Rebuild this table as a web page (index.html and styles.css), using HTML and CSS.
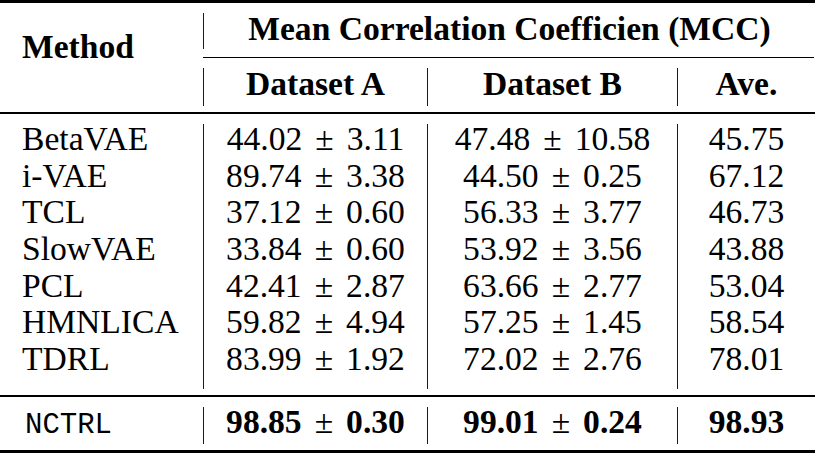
FILE: index.html
```html
<!DOCTYPE html>
<html lang="en">
<head>
<meta charset="utf-8">
<title>Mean Correlation Coefficient results</title>
<link rel="stylesheet" href="styles.css">
</head>
<body>
<div class="table">
  <div class="rule rule-heavy"></div>
  <div class="head">
    <div class="head-method">Method</div>
    <div class="head-right">
      <div class="head-title">Mean Correlation Coefficien (MCC)</div>
      <div class="cmid"></div>
      <div class="head-cols">
        <div class="hcell">Dataset A</div>
        <div class="hcell">Dataset B</div>
        <div class="hcell">Ave.</div>
      </div>
    </div>
  </div>
  <div class="rule rule-mid"></div>
  <div class="block">
    <div class="row"><div class="c-name">BetaVAE</div><div class="c-num">44.02<span class="pm">±</span>3.11</div><div class="c-num">47.48<span class="pm">±</span>10.58</div><div class="c-num">45.75</div></div>
    <div class="row"><div class="c-name">i-VAE</div><div class="c-num">89.74<span class="pm">±</span>3.38</div><div class="c-num">44.50<span class="pm">±</span>0.25</div><div class="c-num">67.12</div></div>
    <div class="row"><div class="c-name">TCL</div><div class="c-num">37.12<span class="pm">±</span>0.60</div><div class="c-num">56.33<span class="pm">±</span>3.77</div><div class="c-num">46.73</div></div>
    <div class="row"><div class="c-name">SlowVAE</div><div class="c-num">33.84<span class="pm">±</span>0.60</div><div class="c-num">53.92<span class="pm">±</span>3.56</div><div class="c-num">43.88</div></div>
    <div class="row"><div class="c-name">PCL</div><div class="c-num">42.41<span class="pm">±</span>2.87</div><div class="c-num">63.66<span class="pm">±</span>2.77</div><div class="c-num">53.04</div></div>
    <div class="row"><div class="c-name">HMNLICA</div><div class="c-num">59.82<span class="pm">±</span>4.94</div><div class="c-num">57.25<span class="pm">±</span>1.45</div><div class="c-num">58.54</div></div>
    <div class="row row-last"><div class="c-name">TDRL</div><div class="c-num">83.99<span class="pm">±</span>1.92</div><div class="c-num">72.02<span class="pm">±</span>2.76</div><div class="c-num">78.01</div></div>
  </div>
  <div class="rule rule-mid"></div>
  <div class="block">
    <div class="row row-best"><div class="c-name"><span class="tt">NCTRL</span></div><div class="c-num">98.85<span class="pm">±</span>0.30</div><div class="c-num">99.01<span class="pm">±</span>0.24</div><div class="c-num">98.93</div></div>
  </div>
  <div class="rule rule-heavy"></div>
</div>
</body>
</html>
```

FILE: styles.css
```css
* {
  box-sizing: border-box;
  margin: 0;
  padding: 0;
}

html, body {
  background: #ffffff;
}

body {
  margin: 0;
  font-family: "Liberation Serif", "Times New Roman", serif;
  font-size: 33.6px;
  color: #000000;
}

.table {
  width: 815px;
}

.rule {
  background: #000000;
}

.rule-heavy {
  height: 3px;
}

.rule-mid {
  height: 2px;
}

.head {
  display: grid;
  grid-template-columns: 203px 612px;
}

.head-method {
  font-weight: bold;
  line-height: 37.2px;
  padding: 25px 0 0 22px;
}

.head-right {
  padding: 10px 0 6px;
}

.head-title {
  border-left: 1px solid #1a1a1a;
  font-weight: bold;
  text-align: center;
  line-height: 32.5px;
  height: 36px;
}

.cmid {
  height: 1px;
  background: #000000;
  margin: 8px 1px 10px 0;
}

.head-cols {
  display: grid;
  grid-template-columns: 224px 250px 138px;
}

.hcell {
  border-left: 1px solid #1a1a1a;
  font-weight: bold;
  text-align: center;
  line-height: 31px;
  height: 38px;
}

.block {
  padding: 10px 0 6px;
}

.row {
  display: grid;
  grid-template-columns: 203px 224px 250px 138px;
}

.row > div {
  line-height: 29.3px;
  height: 36.67px;
  white-space: nowrap;
}

.row-last > div {
  height: 44.67px;
}

.row-best > div {
  line-height: 29px;
  height: 37px;
}

.c-name {
  padding-left: 22px;
}

.c-num {
  border-left: 1px solid #1a1a1a;
  text-align: center;
}

.pm {
  padding: 0 13px;
}

.row-best .c-num {
  font-weight: bold;
}

.row-best .pm {
  font-weight: normal;
}

.tt {
  font-family: "Liberation Mono", "Courier New", monospace;
  font-size: 29px;
  line-height: 1;
  padding-left: 3px;
}
```
